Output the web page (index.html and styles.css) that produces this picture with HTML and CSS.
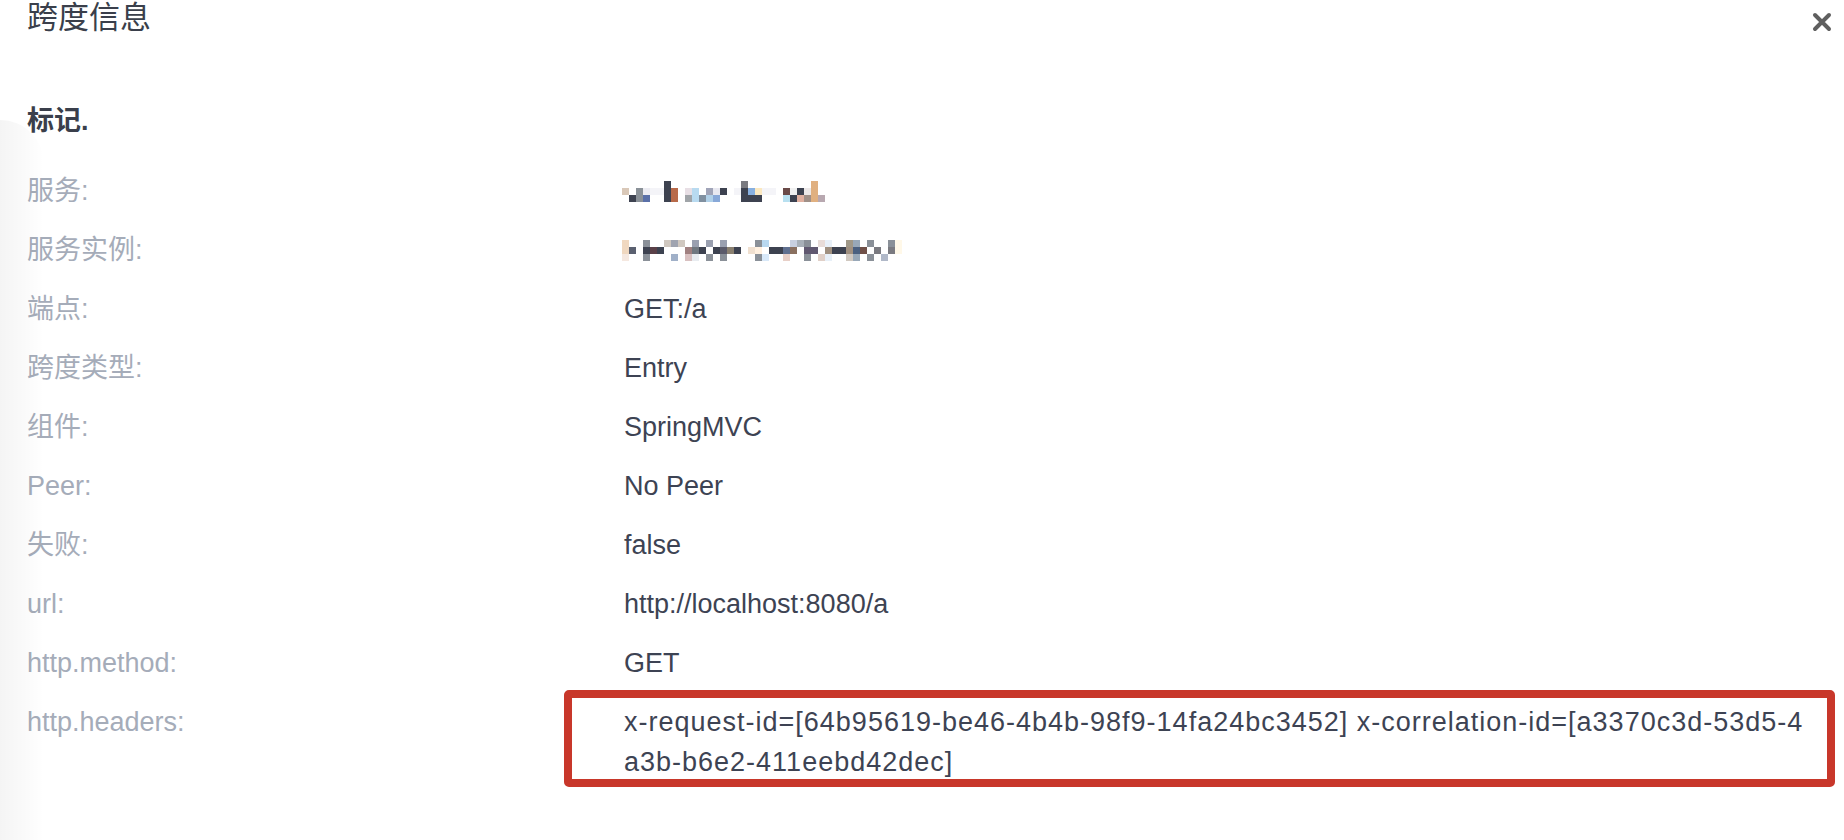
FILE: index.html
```html
<!DOCTYPE html>
<html lang="zh-CN">
<head>
    <meta charset="UTF-8">
    <meta name="viewport" content="width=device-width, initial-scale=1.0">
    <title>跨度信息</title>
    <link rel="stylesheet" href="styles.css">
</head>
<body>
    <div class="span-panel">
        <header class="panel-header">
            <h1 class="panel-title">跨度信息</h1>
            <button class="close-btn" aria-label="close">
                <svg width="20" height="20" viewBox="0 0 20 20">
                    <path d="M3 3 L17 17 M17 3 L3 17" stroke="#5f5f5f" stroke-width="4" stroke-linecap="round" fill="none"/>
                </svg>
            </button>
        </header>

        <section class="panel-body">
            <h2 class="tag-title">标记.</h2>

            <div class="tag-list">
                <div class="tag-label">服务:</div>
                <div class="tag-value masked">
                    <!-- redacted in the original -->
                    <svg class="mosaic" width="210" height="21" viewBox="0 0 210 21">
                        <rect x="42" y="0" width="7" height="7" fill="#3d4250"/>
                        <rect x="119" y="0" width="7" height="7" fill="#7a7a80"/>
                        <rect x="189" y="0" width="7" height="7" fill="#e0b080"/>
                        <rect x="0" y="7" width="7" height="7" fill="#d9c8b8"/>
                        <rect x="14" y="7" width="7" height="7" fill="#8a9198"/>
                        <rect x="21" y="7" width="7" height="7" fill="#ececf2"/>
                        <rect x="28" y="7" width="14" height="7" fill="#f4f4f8"/>
                        <rect x="42" y="7" width="7" height="7" fill="#3d4250"/>
                        <rect x="49" y="7" width="7" height="7" fill="#b86a4a"/>
                        <rect x="63" y="7" width="7" height="7" fill="#e8dfe5"/>
                        <rect x="70" y="7" width="7" height="7" fill="#b8daf0"/>
                        <rect x="84" y="7" width="7" height="7" fill="#a0a4b8"/>
                        <rect x="91" y="7" width="7" height="7" fill="#e8e8f0"/>
                        <rect x="98" y="7" width="7" height="7" fill="#3d4250"/>
                        <rect x="112" y="7" width="7" height="7" fill="#f4f4f8"/>
                        <rect x="119" y="7" width="7" height="7" fill="#3d4250"/>
                        <rect x="126" y="7" width="7" height="7" fill="#88b0e0"/>
                        <rect x="133" y="7" width="7" height="7" fill="#fbe8c0"/>
                        <rect x="140" y="7" width="14" height="7" fill="#f4f4f8"/>
                        <rect x="161" y="7" width="7" height="7" fill="#6a4a48"/>
                        <rect x="168" y="7" width="7" height="7" fill="#f0f0f0"/>
                        <rect x="175" y="7" width="7" height="7" fill="#3d4250"/>
                        <rect x="182" y="7" width="7" height="7" fill="#ece8e8"/>
                        <rect x="189" y="7" width="7" height="7" fill="#e0b080"/>
                        <rect x="7" y="14" width="7" height="7" fill="#3d4250"/>
                        <rect x="14" y="14" width="7" height="7" fill="#8a9198"/>
                        <rect x="21" y="14" width="7" height="7" fill="#5a70a8"/>
                        <rect x="42" y="14" width="7" height="7" fill="#3d4250"/>
                        <rect x="49" y="14" width="7" height="7" fill="#b86a4a"/>
                        <rect x="63" y="14" width="7" height="7" fill="#a0a4a8"/>
                        <rect x="70" y="14" width="7" height="7" fill="#b8daf0"/>
                        <rect x="77" y="14" width="7" height="7" fill="#8090a0"/>
                        <rect x="84" y="14" width="7" height="7" fill="#b0d0e8"/>
                        <rect x="91" y="14" width="7" height="7" fill="#88a8d8"/>
                        <rect x="119" y="14" width="21" height="7" fill="#3d4250"/>
                        <rect x="161" y="14" width="7" height="7" fill="#b8e0f0"/>
                        <rect x="168" y="14" width="7" height="7" fill="#3d4250"/>
                        <rect x="175" y="14" width="7" height="7" fill="#e0b0a0"/>
                        <rect x="182" y="14" width="7" height="7" fill="#a09088"/>
                        <rect x="189" y="14" width="7" height="7" fill="#e0b080"/>
                        <rect x="196" y="14" width="7" height="7" fill="#b8a8b0"/>
                    </svg>
                </div>

                <div class="tag-label">服务实例:</div>
                <div class="tag-value masked">
                    <svg class="mosaic" width="280" height="21" viewBox="0 0 280 21">
                        <rect x="0" y="0" width="7" height="7" fill="#f0d8c0"/>
                        <rect x="21" y="0" width="7" height="7" fill="#8a9098"/>
                        <rect x="42" y="0" width="7" height="7" fill="#d0c8c0"/>
                        <rect x="49" y="0" width="7" height="7" fill="#a0a4b0"/>
                        <rect x="56" y="0" width="7" height="7" fill="#d0c8c0"/>
                        <rect x="70" y="0" width="7" height="7" fill="#9aa0b0"/>
                        <rect x="84" y="0" width="7" height="7" fill="#9aa0b0"/>
                        <rect x="98" y="0" width="7" height="7" fill="#9aa0b0"/>
                        <rect x="133" y="0" width="7" height="7" fill="#8a9098"/>
                        <rect x="140" y="0" width="7" height="7" fill="#b8d8f0"/>
                        <rect x="168" y="0" width="7" height="7" fill="#c8d0e0"/>
                        <rect x="175" y="0" width="7" height="7" fill="#a8b0b8"/>
                        <rect x="182" y="0" width="7" height="7" fill="#8a9098"/>
                        <rect x="196" y="0" width="7" height="7" fill="#e8dcd8"/>
                        <rect x="203" y="0" width="7" height="7" fill="#e8f0f8"/>
                        <rect x="224" y="0" width="7" height="7" fill="#a09888"/>
                        <rect x="231" y="0" width="7" height="7" fill="#98a8b8"/>
                        <rect x="245" y="0" width="7" height="7" fill="#8a9098"/>
                        <rect x="266" y="0" width="7" height="7" fill="#8a9098"/>
                        <rect x="273" y="0" width="7" height="7" fill="#fff8e8"/>
                        <rect x="0" y="7" width="7" height="7" fill="#f0d8c0"/>
                        <rect x="7" y="7" width="7" height="7" fill="#5a6070"/>
                        <rect x="21" y="7" width="7" height="7" fill="#3d4250"/>
                        <rect x="28" y="7" width="7" height="7" fill="#5a4048"/>
                        <rect x="35" y="7" width="7" height="7" fill="#3d4250"/>
                        <rect x="63" y="7" width="7" height="7" fill="#a08080"/>
                        <rect x="70" y="7" width="7" height="7" fill="#707880"/>
                        <rect x="77" y="7" width="7" height="7" fill="#3d4250"/>
                        <rect x="91" y="7" width="7" height="7" fill="#3d4250"/>
                        <rect x="98" y="7" width="7" height="7" fill="#5a5a6a"/>
                        <rect x="105" y="7" width="7" height="7" fill="#8a8070"/>
                        <rect x="112" y="7" width="7" height="7" fill="#3d4250"/>
                        <rect x="126" y="7" width="7" height="7" fill="#f0e0d0"/>
                        <rect x="133" y="7" width="7" height="7" fill="#fff0e0"/>
                        <rect x="147" y="7" width="14" height="7" fill="#3d4250"/>
                        <rect x="161" y="7" width="7" height="7" fill="#607090"/>
                        <rect x="168" y="7" width="7" height="7" fill="#8a7060"/>
                        <rect x="182" y="7" width="14" height="7" fill="#605870"/>
                        <rect x="203" y="7" width="7" height="7" fill="#a09080"/>
                        <rect x="210" y="7" width="14" height="7" fill="#3d4250"/>
                        <rect x="224" y="7" width="7" height="7" fill="#a09080"/>
                        <rect x="231" y="7" width="7" height="7" fill="#4a6080"/>
                        <rect x="238" y="7" width="7" height="7" fill="#705048"/>
                        <rect x="252" y="7" width="7" height="7" fill="#7a7a80"/>
                        <rect x="266" y="7" width="7" height="7" fill="#7a7a80"/>
                        <rect x="273" y="7" width="7" height="7" fill="#fff8e8"/>
                        <rect x="0" y="14" width="7" height="7" fill="#f5e8e0"/>
                        <rect x="21" y="14" width="7" height="7" fill="#8a9098"/>
                        <rect x="49" y="14" width="7" height="7" fill="#a0b0c8"/>
                        <rect x="63" y="14" width="7" height="7" fill="#d8c0c0"/>
                        <rect x="70" y="14" width="7" height="7" fill="#e8ecf0"/>
                        <rect x="84" y="14" width="7" height="7" fill="#8a9098"/>
                        <rect x="98" y="14" width="7" height="7" fill="#8a9098"/>
                        <rect x="133" y="14" width="7" height="7" fill="#8a9098"/>
                        <rect x="140" y="14" width="7" height="7" fill="#d8e8f8"/>
                        <rect x="161" y="14" width="7" height="7" fill="#e8d0c8"/>
                        <rect x="182" y="14" width="7" height="7" fill="#8a9098"/>
                        <rect x="196" y="14" width="7" height="7" fill="#e0d0c8"/>
                        <rect x="203" y="14" width="7" height="7" fill="#e8f0f8"/>
                        <rect x="224" y="14" width="7" height="7" fill="#d0c8c0"/>
                        <rect x="231" y="14" width="7" height="7" fill="#98a8b8"/>
                        <rect x="245" y="14" width="7" height="7" fill="#8a9098"/>
                        <rect x="259" y="14" width="7" height="7" fill="#b0b8c8"/>
                    </svg>
                </div>

                <div class="tag-label">端点:</div>
                <div class="tag-value">GET:/a</div>

                <div class="tag-label">跨度类型:</div>
                <div class="tag-value">Entry</div>

                <div class="tag-label">组件:</div>
                <div class="tag-value">SpringMVC</div>

                <div class="tag-label">Peer:</div>
                <div class="tag-value">No Peer</div>

                <div class="tag-label">失败:</div>
                <div class="tag-value">false</div>

                <div class="tag-label">url:</div>
                <div class="tag-value">http://localhost:8080/a</div>

                <div class="tag-label">http.method:</div>
                <div class="tag-value">GET</div>

                <div class="tag-label">http.headers:</div>
                <div class="tag-value headers highlighted">x-request-id=[64b95619-be46-4b4b-98f9-14fa24bc3452] x-correlation-id=[a3370c3d-53d5-4a3b-b6e2-411eebd42dec]</div>
            </div>
        </section>
    </div>
</body>
</html>
```

FILE: styles.css
```css
* {
    margin: 0;
    padding: 0;
    box-sizing: border-box;
}

body {
    background-color: #ffffff;
    color: #3d4353;
    font-family: "Liberation Sans", "Noto Sans CJK SC", sans-serif;
    min-height: 100vh;
    overflow: hidden;
}

.span-panel {
    position: relative;
    min-height: 840px;
}

/* faint shadow of the page behind the drawer */
.span-panel::before {
    content: "";
    position: absolute;
    left: 0;
    top: 120px;
    bottom: 0;
    width: 44px;
    border-top-right-radius: 60px;
    background: linear-gradient(to right, rgba(0, 0, 0, 0.045), rgba(0, 0, 0, 0));
    pointer-events: none;
}

.panel-header {
    display: flex;
    justify-content: space-between;
    align-items: flex-start;
    height: 36px;
    padding: 0 12px 0 27px;
}

.panel-title {
    font-size: 31px;
    line-height: 36px;
    font-weight: 400;
    color: #3a3f4b;
}

.close-btn {
    background: none;
    border: none;
    cursor: pointer;
    width: 20px;
    height: 20px;
    margin-top: 12px;
}

.close-btn svg {
    display: block;
}

.panel-body {
    padding: 66px 32px 0 27px;
}

.tag-title {
    font-size: 27px;
    line-height: 38px;
    font-weight: 700;
    color: #3a3f4b;
    margin-bottom: 32px;
}

.tag-list {
    display: grid;
    grid-template-columns: 597px 1fr;
    row-gap: 21px;
    font-size: 27px;
    line-height: 38px;
}

.tag-label {
    color: #a5acb9;
}

.tag-value {
    color: #3d4353;
    word-break: break-all;
}

.tag-value.masked {
    display: flex;
    align-items: center;
    min-height: 38px;
    margin-left: -2px;
}

.mosaic {
    display: block;
}

.tag-value.headers {
    letter-spacing: 1px;
    line-height: 40px;
    margin-top: -1px;
}

/* red annotation box around the headers value */
.highlighted {
    position: relative;
}

.highlighted::after {
    content: "";
    position: absolute;
    top: -12px;
    right: -23px;
    bottom: -5px;
    left: -60px;
    border: 8px solid #c8372a;
    border-radius: 5px;
    pointer-events: none;
}
```
